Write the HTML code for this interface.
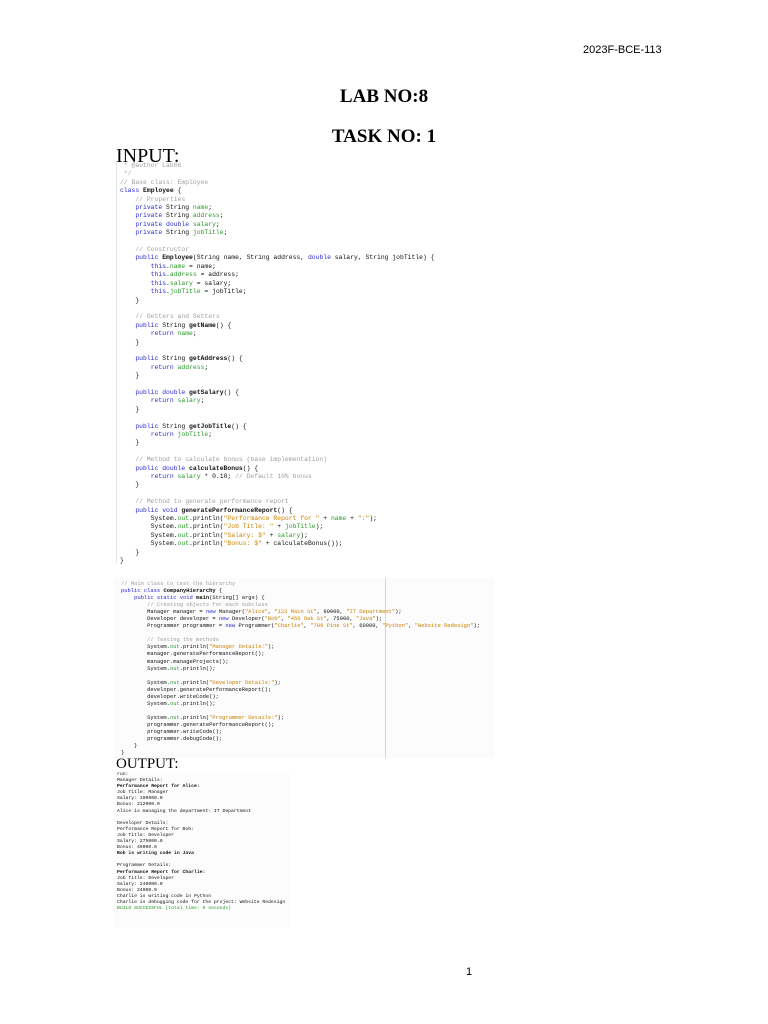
<!DOCTYPE html>
<html><head><meta charset="utf-8"><style>
body{margin:0;background:#fff;width:768px;height:1024px;position:relative;overflow:hidden;font-family:"Liberation Serif",serif;}
.a{position:absolute;}
pre{margin:0;font-family:"Liberation Mono",monospace;color:#111;white-space:pre;}
.k{color:#2a2ad0}.s{color:#c98200}.c{color:#a0a0a0}.f{color:#2a9a2a}.b{font-weight:bold}
</style></head><body>
<div class="a" style="left:583px;top:44px;font-family:'Liberation Sans',sans-serif;font-size:11px;">2023F-BCE-113</div>
<div class="a" style="left:0;width:768px;top:86px;text-align:center;font-weight:bold;font-size:19px;">LAB NO:8</div>
<div class="a" style="left:0;width:768px;top:126px;text-align:center;font-weight:bold;font-size:19px;">TASK NO: 1</div>
<div class="a" style="left:116px;top:145px;font-size:20px;">INPUT:</div>
<div class="a" style="left:116px;top:163px;width:1px;height:400px;background:#e4e4e4"></div>
<pre class="a" style="left:120px;top:162px;font-size:6.4px;line-height:8.4px;"><span class="c"> * @author Lab06
 */
// Base class: Employee</span>
<span class="k">class</span> <span class="b">Employee</span> {
    <span class="c">// Properties</span>
    <span class="k">private</span> String <span class="f">name</span>;
    <span class="k">private</span> String <span class="f">address</span>;
    <span class="k">private double</span> <span class="f">salary</span>;
    <span class="k">private</span> String <span class="f">jobTitle</span>;

    <span class="c">// Constructor</span>
    <span class="k">public</span> <span class="b">Employee</span>(String name, String address, <span class="k">double</span> salary, String jobTitle) {
        <span class="k">this</span>.<span class="f">name</span> = name;
        <span class="k">this</span>.<span class="f">address</span> = address;
        <span class="k">this</span>.<span class="f">salary</span> = salary;
        <span class="k">this</span>.<span class="f">jobTitle</span> = jobTitle;
    }

    <span class="c">// Getters and Setters</span>
    <span class="k">public</span> String <span class="b">getName</span>() {
        <span class="k">return</span> <span class="f">name</span>;
    }

    <span class="k">public</span> String <span class="b">getAddress</span>() {
        <span class="k">return</span> <span class="f">address</span>;
    }

    <span class="k">public double</span> <span class="b">getSalary</span>() {
        <span class="k">return</span> <span class="f">salary</span>;
    }

    <span class="k">public</span> String <span class="b">getJobTitle</span>() {
        <span class="k">return</span> <span class="f">jobTitle</span>;
    }

    <span class="c">// Method to calculate bonus (base implementation)</span>
    <span class="k">public double</span> <span class="b">calculateBonus</span>() {
        <span class="k">return</span> <span class="f">salary</span> * 0.10; <span class="c">// Default 10% bonus</span>
    }

    <span class="c">// Method to generate performance report</span>
    <span class="k">public void</span> <span class="b">generatePerformanceReport</span>() {
        System.<span class="f">out</span>.println(<span class="s">"Performance Report for "</span> + <span class="f">name</span> + <span class="s">":"</span>);
        System.<span class="f">out</span>.println(<span class="s">"Job Title: "</span> + <span class="f">jobTitle</span>);
        System.<span class="f">out</span>.println(<span class="s">"Salary: $"</span> + <span class="f">salary</span>);
        System.<span class="f">out</span>.println(<span class="s">"Bonus: $"</span> + calculateBonus());
    }
}</pre>
<div class="a" style="left:114px;top:578px;width:380px;height:180px;background:#fcfcfc"></div>
<div class="a" style="left:385px;top:578px;width:1px;height:180px;background:#f4c8c8"></div>
<pre class="a" style="left:121px;top:580px;font-size:5.45px;line-height:7.05px;"><span class="c">// Main class to test the hierarchy</span>
<span class="k">public class</span> <span class="b">CompanyHierarchy</span> {
    <span class="k">public static void</span> <span class="b">main</span>(String[] args) {
        <span class="c">// Creating objects for each subclass</span>
        Manager manager = <span class="k">new</span> Manager(<span class="s">"Alice"</span>, <span class="s">"123 Main St"</span>, 90000, <span class="s">"IT Department"</span>);
        Developer developer = <span class="k">new</span> Developer(<span class="s">"Bob"</span>, <span class="s">"456 Oak St"</span>, 75000, <span class="s">"Java"</span>);
        Programmer programmer = <span class="k">new</span> Programmer(<span class="s">"Charlie"</span>, <span class="s">"789 Pine St"</span>, 60000, <span class="s">"Python"</span>, <span class="s">"Website Redesign"</span>);

        <span class="c">// Testing the methods</span>
        System.<span class="f">out</span>.println(<span class="s">"Manager Details:"</span>);
        manager.generatePerformanceReport();
        manager.manageProjects();
        System.<span class="f">out</span>.println();

        System.<span class="f">out</span>.println(<span class="s">"Developer Details:"</span>);
        developer.generatePerformanceReport();
        developer.writeCode();
        System.<span class="f">out</span>.println();

        System.<span class="f">out</span>.println(<span class="s">"Programmer Details:"</span>);
        programmer.generatePerformanceReport();
        programmer.writeCode();
        programmer.debugCode();
    }
}</pre>
<div class="a" style="left:116px;top:756px;font-size:15px;">OUTPUT:</div>
<div class="a" style="left:114px;top:772px;width:176px;height:156px;background:#fcfcfc"></div>
<pre class="a" style="left:117px;top:772px;font-size:4.75px;line-height:6.1px;">run:
Manager Details:
<b>Performance Report for Alice:</b>
Job Title: Manager
Salary: 190000.0
Bonus: 212000.0
Alice is managing the department: IT Department

Developer Details:
Performance Report for Bob:
Job Title: Developer
Salary: 275000.0
Bonus: 49000.0
<b>Bob is writing code in Java</b>

Programmer Details:
<b>Performance Report for Charlie:</b>
Job Title: Developer
Salary: 240000.0
Bonus: 24000.0
Charlie is writing code in Python
Charlie is debugging code for the project: Website Redesign
<span style="color:#2a9a2a">BUILD SUCCESSFUL (total time: 0 seconds)</span></pre>
<div class="a" style="left:466px;top:966px;font-family:'Liberation Sans',sans-serif;font-size:11px;">1</div>
</body></html>
